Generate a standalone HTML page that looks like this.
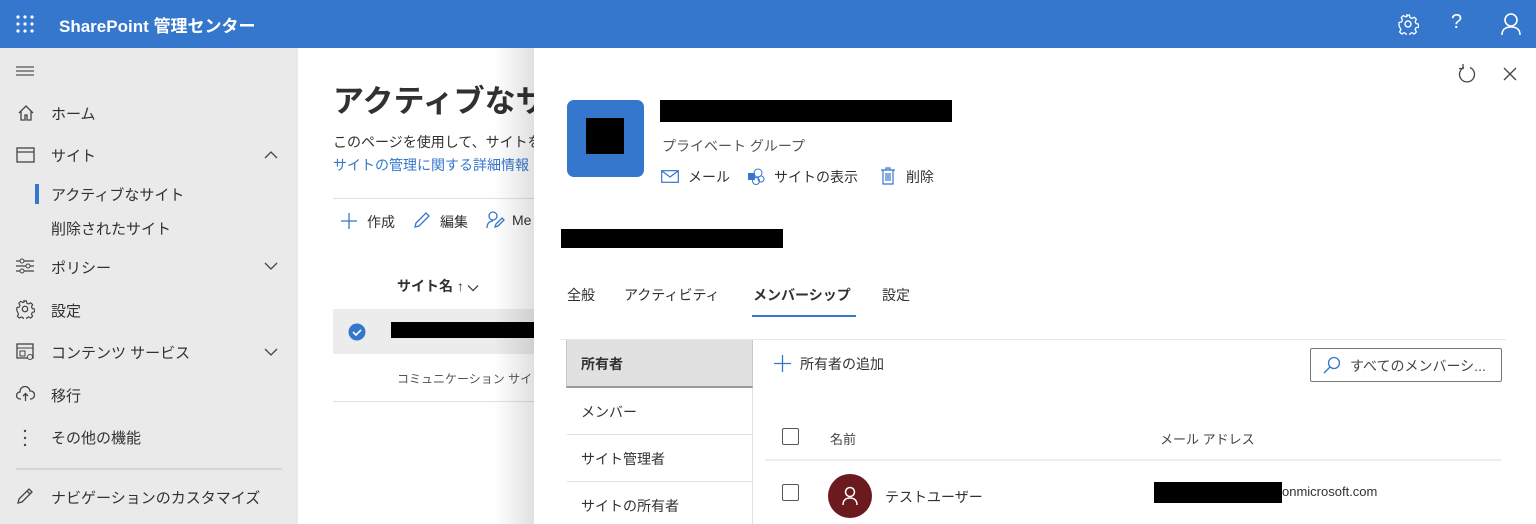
<!DOCTYPE html>
<html><head><meta charset="utf-8"><style>
*{margin:0;padding:0;box-sizing:border-box}
body{width:1536px;height:524px;overflow:hidden;position:relative;font-family:"Liberation Sans","Noto Sans CJK JP",sans-serif;color:#323130;background:#fff}
.a{position:absolute;white-space:nowrap}
.hdr{left:0;top:0;width:1536px;height:48px;background:#3477cc}
.nav{left:0;top:48px;width:298px;height:476px;background:#eaeaea}
.ni{font-size:15px;color:#323130}
.blk{background:#000}
svg{position:absolute}
</style></head><body>
<div class="a hdr"></div>
<svg style="left:16px;top:15px" width="18" height="18"><g fill="#fff"><circle cx="2" cy="2" r="1.6"/><circle cx="9" cy="2" r="1.6"/><circle cx="16" cy="2" r="1.6"/><circle cx="2" cy="9" r="1.6"/><circle cx="9" cy="9" r="1.6"/><circle cx="16" cy="9" r="1.6"/><circle cx="2" cy="16" r="1.6"/><circle cx="9" cy="16" r="1.6"/><circle cx="16" cy="16" r="1.6"/></g></svg>
<div class="a" style="left:59px;top:12px;font-size:17px;color:#fff;font-weight:bold">SharePoint 管理センター</div>
<svg style="left:1397px;top:13px" width="22" height="22" viewBox="0 0 22 22"><circle cx="11" cy="11" r="3" fill="none" stroke="#fff" stroke-width="1.4"/><path d="M9.5 2h3l.5 2.5 2 1 2.3-1.3 2.1 2.1-1.3 2.3 1 2 2.5.5v3l-2.5.5-1 2 1.3 2.3-2.1 2.1-2.3-1.3-2 1-.5 2.5h-3l-.5-2.5-2-1-2.3 1.3-2.1-2.1 1.3-2.3-1-2L2 12.5v-3l2.5-.5 1-2-1.3-2.3 2.1-2.1 2.3 1.3 2-1z" fill="none" stroke="#fff" stroke-width="1.3" stroke-linejoin="round"/></svg>
<div class="a" style="left:1451px;top:11px;font-size:20px;color:#fff">?</div>
<svg style="left:1500px;top:12px" width="22" height="24"><circle cx="11" cy="8" r="6" fill="none" stroke="#fff" stroke-width="1.6"/><path d="M2 23c0-6 4-8 9-8s9 2 9 8" fill="none" stroke="#fff" stroke-width="1.6"/></svg>

<div class="a nav"></div>
<svg style="left:16px;top:66px" width="18" height="10"><path d="M0 1h18M0 5h18M0 9h18" stroke="#555" stroke-width="1.2"/></svg>
<svg style="left:17px;top:104px" width="18" height="18"><path d="M2 9L9 2l7 7M4 7v9h4v-5h2v5h4V7" fill="none" stroke="#444" stroke-width="1.3"/></svg>
<div class="a ni" style="left:51px;top:103px">ホーム</div>
<svg style="left:16px;top:147px" width="19" height="16"><rect x="1" y="1" width="17" height="14" fill="none" stroke="#444" stroke-width="1.3"/><path d="M1 5h17" stroke="#444" stroke-width="1.3"/></svg>
<div class="a ni" style="left:51px;top:145px">サイト</div>
<svg style="left:264px;top:150px" width="14" height="9"><path d="M1 8l6-6 6 6" fill="none" stroke="#444" stroke-width="1.3"/></svg>
<div class="a" style="left:35px;top:184px;width:4px;height:20px;background:#3477cc"></div>
<div class="a ni" style="left:51px;top:184px">アクティブなサイト</div>
<div class="a ni" style="left:51px;top:218px">削除されたサイト</div>
<svg style="left:16px;top:258px" width="18" height="16"><path d="M0 3h18M0 8h18M0 13h18" stroke="#444" stroke-width="1.2"/><circle cx="6" cy="3" r="2" fill="#eaeaea" stroke="#444"/><circle cx="12" cy="8" r="2" fill="#eaeaea" stroke="#444"/><circle cx="6" cy="13" r="2" fill="#eaeaea" stroke="#444"/></svg>
<div class="a ni" style="left:51px;top:257px">ポリシー</div>
<svg style="left:264px;top:262px" width="14" height="9"><path d="M1 1l6 6 6-6" fill="none" stroke="#444" stroke-width="1.3"/></svg>
<svg style="left:15px;top:299px" width="20" height="20" viewBox="0 0 22 22"><circle cx="11" cy="11" r="3" fill="none" stroke="#444" stroke-width="1.4"/><path d="M9.5 2h3l.5 2.5 2 1 2.3-1.3 2.1 2.1-1.3 2.3 1 2 2.5.5v3l-2.5.5-1 2 1.3 2.3-2.1 2.1-2.3-1.3-2 1-.5 2.5h-3l-.5-2.5-2-1-2.3 1.3-2.1-2.1 1.3-2.3-1-2L2 12.5v-3l2.5-.5 1-2-1.3-2.3 2.1-2.1 2.3 1.3 2-1z" fill="none" stroke="#444" stroke-width="1.3" stroke-linejoin="round"/></svg>
<div class="a ni" style="left:51px;top:300px">設定</div>
<svg style="left:16px;top:343px" width="18" height="18"><rect x="1" y="1" width="16" height="14" fill="none" stroke="#444" stroke-width="1.3"/><path d="M1 5h16M4 8h5v5H4z" fill="none" stroke="#444"/><circle cx="14" cy="14" r="2.5" fill="#eaeaea" stroke="#444"/></svg>
<div class="a ni" style="left:51px;top:342px">コンテンツ サービス</div>
<svg style="left:264px;top:348px" width="14" height="9"><path d="M1 1l6 6 6-6" fill="none" stroke="#444" stroke-width="1.3"/></svg>
<svg style="left:16px;top:386px" width="19" height="16"><path d="M5 13H4a3 3 0 010-7 5 5 0 0110-1 4 4 0 011 8h-1M9.5 15V8M7 10l2.5-2.5L12 10" fill="none" stroke="#444" stroke-width="1.3"/></svg>
<div class="a ni" style="left:51px;top:385px">移行</div>
<svg style="left:23px;top:429px" width="4" height="18"><circle cx="2" cy="2" r="1.2" fill="#444"/><circle cx="2" cy="9" r="1.2" fill="#444"/><circle cx="2" cy="16" r="1.2" fill="#444"/></svg>
<div class="a ni" style="left:51px;top:427px">その他の機能</div>
<div class="a" style="left:16px;top:468px;width:266px;height:2px;background:#d6d6d6"></div>
<svg style="left:16px;top:487px" width="18" height="18"><path d="M2 16l1-4L13 2l3 3L6 15z M11 4l3 3" fill="none" stroke="#444" stroke-width="1.3"/></svg>
<div class="a ni" style="left:51px;top:487px">ナビゲーションのカスタマイズ</div>

<div class="a" style="left:333px;top:76px;font-size:31px;font-weight:bold;color:#323130">アクティブなサイト</div>
<div class="a" style="left:333px;top:132px;font-size:14px">このページを使用して、サイトを管理します。</div>
<div class="a" style="left:333px;top:155px;font-size:14px;color:#3477cc">サイトの管理に関する詳細情報</div>
<div class="a" style="left:333px;top:198px;width:210px;height:1px;background:#e1e1e1"></div>
<svg style="left:340px;top:212px" width="18" height="18"><path d="M9 1v16M1 9h16" stroke="#3477cc" stroke-width="1.3"/></svg>
<div class="a" style="left:367px;top:212px;font-size:14px">作成</div>
<svg style="left:413px;top:211px" width="18" height="18"><path d="M2 16l1-4L13 2l3 3L6 15z" fill="none" stroke="#3477cc" stroke-width="1.3"/></svg>
<div class="a" style="left:440px;top:212px;font-size:14px">編集</div>
<svg style="left:486px;top:211px" width="20" height="18"><circle cx="7" cy="5" r="4" fill="none" stroke="#3477cc" stroke-width="1.3"/><path d="M1 17c0-5 3-7 6-7M9 16l1-3 6-6 2 2-6 6z" fill="none" stroke="#3477cc" stroke-width="1.3"/></svg>
<div class="a" style="left:512px;top:212px;font-size:14px">Me</div>
<div class="a" style="left:397px;top:276px;font-size:14px;font-weight:bold">サイト名 ↑ ⌵</div>
<div class="a" style="left:333px;top:309px;width:210px;height:45px;background:#ececec"></div>
<svg style="left:348px;top:323px" width="18" height="18"><circle cx="9" cy="9" r="8.5" fill="#3477cc"/><path d="M5 9l3 3 5-5" fill="none" stroke="#fff" stroke-width="1.6"/></svg>
<div class="a blk" style="left:391px;top:322px;width:150px;height:16px"></div>
<div class="a" style="left:397px;top:370px;font-size:12px;color:#555">コミュニケーション サイト</div>
<div class="a" style="left:333px;top:401px;width:210px;height:1px;background:#e1e1e1"></div>

<div class="a" style="left:494px;top:48px;width:40px;height:476px;background:linear-gradient(to right,rgba(0,0,0,0),rgba(0,0,0,0.12))"></div>
<div class="a" style="left:534px;top:48px;width:1002px;height:476px;background:#fff"></div>
<svg style="left:1457px;top:64px" width="20" height="20"><path d="M7 3.5A7.5 7.5 0 1013 3.5" fill="none" stroke="#444" stroke-width="1.3"/><path d="M6 0v4.5H2" fill="none" stroke="#444" stroke-width="1.3"/></svg>
<svg style="left:1503px;top:67px" width="14" height="14"><path d="M1 1l12 12M13 1L1 13" stroke="#444" stroke-width="1.3"/></svg>
<div class="a" style="left:567px;top:100px;width:77px;height:77px;background:#3477cc;border-radius:7px"></div>
<div class="a blk" style="left:586px;top:118px;width:38px;height:36px"></div>
<div class="a blk" style="left:660px;top:100px;width:292px;height:22px"></div>
<div class="a" style="left:662px;top:136px;font-size:14px;color:#555">プライベート グループ</div>
<svg style="left:661px;top:170px" width="18" height="13"><rect x="0.7" y="0.7" width="16.6" height="11.6" fill="none" stroke="#3477cc" stroke-width="1.2"/><path d="M1 1l8 6 8-6" fill="none" stroke="#3477cc" stroke-width="1.2"/></svg>
<div class="a" style="left:688px;top:167px;font-size:14px">メール</div>
<svg style="left:747px;top:168px" width="18" height="17"><circle cx="11" cy="5" r="4" fill="none" stroke="#3477cc"/><circle cx="14" cy="11" r="3" fill="none" stroke="#3477cc"/><circle cx="9" cy="13" r="3.5" fill="none" stroke="#3477cc"/><rect x="1" y="5" width="7" height="7" fill="#3477cc"/></svg>
<div class="a" style="left:774px;top:167px;font-size:14px">サイトの表示</div>
<svg style="left:881px;top:167px" width="14" height="18"><path d="M0 3h14M5 3V1h4v2M2 3v14h10V3M5 6v8M7 6v8M9 6v8" fill="none" stroke="#3477cc" stroke-width="1.2"/></svg>
<div class="a" style="left:906px;top:167px;font-size:14px">削除</div>
<div class="a blk" style="left:561px;top:229px;width:222px;height:19px"></div>
<div class="a" style="left:567px;top:285px;font-size:14px">全般</div>
<div class="a" style="left:624px;top:285px;font-size:14px">アクティビティ</div>
<div class="a" style="left:753px;top:285px;font-size:14px;font-weight:bold">メンバーシップ</div>
<div class="a" style="left:752px;top:315px;width:104px;height:2px;background:#3477cc"></div>
<div class="a" style="left:882px;top:285px;font-size:14px">設定</div>
<div class="a" style="left:560px;top:339px;width:946px;height:1px;background:#e6e6e6"></div>
<div class="a" style="left:566px;top:340px;width:187px;height:48px;background:#e1e1e1;border-right:1px solid #c8c8c8;border-bottom:2px solid #999;border-left:1px solid #c8c8c8"></div>
<div class="a" style="left:581px;top:354px;font-size:14px;font-weight:bold">所有者</div>
<div class="a" style="left:752px;top:388px;width:1px;height:136px;background:#e1e1e1"></div>
<div class="a" style="left:567px;top:434px;width:186px;height:1px;background:#e1e1e1"></div>
<div class="a" style="left:567px;top:481px;width:186px;height:1px;background:#e1e1e1"></div>
<div class="a" style="left:581px;top:402px;font-size:14px">メンバー</div>
<div class="a" style="left:581px;top:449px;font-size:14px">サイト管理者</div>
<div class="a" style="left:581px;top:496px;font-size:14px">サイトの所有者</div>
<svg style="left:774px;top:355px" width="17" height="17"><path d="M8.5 0v17M0 8.5h17" stroke="#3477cc" stroke-width="1.3"/></svg>
<div class="a" style="left:800px;top:354px;font-size:14px">所有者の追加</div>
<div class="a" style="left:1310px;top:348px;width:192px;height:34px;border:1px solid #777;border-radius:2px"></div>
<svg style="left:1323px;top:356px" width="18" height="18"><circle cx="11" cy="7" r="5.5" fill="none" stroke="#3477cc" stroke-width="1.3"/><path d="M7 11l-6 6" stroke="#3477cc" stroke-width="1.4"/></svg>
<div class="a" style="left:1350px;top:356px;font-size:14px;color:#444">すべてのメンバーシ...</div>
<div class="a" style="left:782px;top:428px;width:17px;height:17px;border:1px solid #555;border-radius:2px"></div>
<div class="a" style="left:830px;top:429px;font-size:13px;color:#444">名前</div>
<div class="a" style="left:1160px;top:429px;font-size:13px;color:#444">メール アドレス</div>
<div class="a" style="left:765px;top:459px;width:737px;height:2px;background:#eee"></div>
<div class="a" style="left:782px;top:484px;width:17px;height:17px;border:1px solid #555;border-radius:2px"></div>
<div class="a" style="left:828px;top:474px;width:44px;height:44px;border-radius:50%;background:#6b1b20"></div>
<svg style="left:840px;top:485px" width="20" height="22"><circle cx="10" cy="7" r="4.5" fill="none" stroke="#fff" stroke-width="1.5"/><path d="M3 20c0-5 3-7 7-7s7 2 7 7" fill="none" stroke="#fff" stroke-width="1.5"/></svg>
<div class="a" style="left:885px;top:487px;font-size:14px">テストユーザー</div>
<div class="a blk" style="left:1154px;top:482px;width:128px;height:21px"></div>
<div class="a" style="left:1282px;top:484px;font-size:13px">onmicrosoft.com</div>
</body></html>
